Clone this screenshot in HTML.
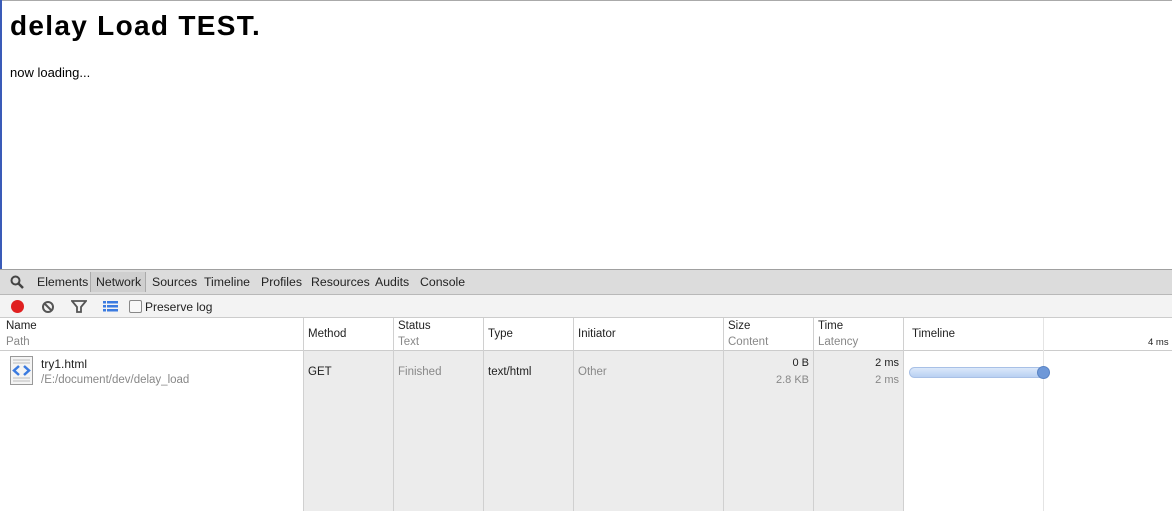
<!DOCTYPE html>
<html><head><meta charset="utf-8"><style>
*{margin:0;padding:0;box-sizing:border-box}
body{width:1172px;height:511px;overflow:hidden;background:#fff;font-family:"Liberation Sans","Noto Sans CJK JP",sans-serif;position:relative}
.abs{position:absolute}
h1{position:absolute;left:10px;top:10px;font-size:28px;font-weight:bold;letter-spacing:1.3px}
.t{font-size:12px;color:#222;white-space:nowrap}
.g{color:#888}
.vl{position:absolute;width:1px;background:#d0d0d0}
.tab{font-size:12.3px}
</style></head><body>
<div class="abs" style="left:0;top:0;width:1172px;height:1px;background:#aaa"></div>
<div class="abs" style="left:0;top:0;width:2px;height:270px;background:#3a5bb8"></div>
<h1>delay Load TEST.</h1>
<div class="abs t" style="left:10px;top:65px;font-size:13px;color:#000">now loading...</div>

<div class="abs" style="left:0;top:269px;width:1172px;height:26px;background:#dcdcdc;border-top:1px solid #a0a0a0;border-bottom:1px solid #b8b8b8"></div>
<svg class="abs" style="left:10px;top:275px" width="14" height="14"><circle cx="5.5" cy="5.5" r="4" fill="none" stroke="#444" stroke-width="2"/><line x1="8.5" y1="8.5" x2="13" y2="13" stroke="#444" stroke-width="2.5"/></svg>
<div class="abs" style="left:90px;top:272px;width:56px;height:20px;background:#cfcfcf;border-left:1px solid #aaa;border-right:1px solid #aaa"></div>
<div class="abs t tab" style="left:37px;top:275px">Elements</div>
<div class="abs t tab" style="left:96px;top:275px">Network</div>
<div class="abs t tab" style="left:152px;top:275px">Sources</div>
<div class="abs t tab" style="left:204px;top:275px">Timeline</div>
<div class="abs t tab" style="left:261px;top:275px">Profiles</div>
<div class="abs t tab" style="left:311px;top:275px">Resources</div>
<div class="abs t tab" style="left:375px;top:275px">Audits</div>
<div class="abs t tab" style="left:420px;top:275px">Console</div>

<div class="abs" style="left:0;top:295px;width:1172px;height:23px;background:#f3f3f3;border-bottom:1px solid #ccc"></div>
<div class="abs" style="left:11px;top:300px;width:13px;height:13px;border-radius:50%;background:#e02020"></div>
<svg class="abs" style="left:41px;top:300px" width="14" height="14"><circle cx="7" cy="7" r="5" fill="none" stroke="#555" stroke-width="2"/><line x1="3.5" y1="3.5" x2="10.5" y2="10.5" stroke="#555" stroke-width="2"/></svg>
<svg class="abs" style="left:71px;top:300px" width="16" height="13"><path d="M1 1H15L10 7V12H6V7Z" fill="none" stroke="#555" stroke-width="1.8"/></svg>
<svg class="abs" style="left:103px;top:301px" width="15" height="11"><g fill="#3b7be0"><rect x="0" y="0" width="3" height="2.5"/><rect x="4" y="0" width="11" height="2.5"/><rect x="0" y="4" width="3" height="2.5"/><rect x="4" y="4" width="11" height="2.5"/><rect x="0" y="8" width="3" height="2.5"/><rect x="4" y="8" width="11" height="2.5"/></g></svg>
<div class="abs" style="left:129px;top:300px;width:13px;height:13px;border:1px solid #888;border-radius:2px;background:#f8f8f8"></div>
<div class="abs t" style="left:145px;top:300px;font-size:12px">Preserve log</div>

<div class="abs" style="left:303px;top:350px;width:600px;height:161px;background:#ececec"></div>
<div class="abs" style="left:0;top:350px;width:1172px;height:1px;background:#ccc"></div>
<div class="vl" style="left:303px;top:318px;height:193px"></div>
<div class="vl" style="left:393px;top:318px;height:193px"></div>
<div class="vl" style="left:483px;top:318px;height:193px"></div>
<div class="vl" style="left:573px;top:318px;height:193px"></div>
<div class="vl" style="left:723px;top:318px;height:193px"></div>
<div class="vl" style="left:813px;top:318px;height:193px"></div>
<div class="vl" style="left:903px;top:318px;height:193px"></div>
<div class="vl" style="left:1043px;top:318px;height:193px;background:#e4e4e4"></div>

<div class="abs t" style="left:6px;top:320px;font-size:11.5px">Name</div>
<div class="abs t g" style="left:6px;top:336px;font-size:11.5px">Path</div>
<div class="abs t" style="left:308px;top:328px;font-size:11.5px">Method</div>
<div class="abs t" style="left:398px;top:320px;font-size:11.5px">Status</div>
<div class="abs t g" style="left:398px;top:336px;font-size:11.5px">Text</div>
<div class="abs t" style="left:488px;top:328px;font-size:11.5px">Type</div>
<div class="abs t" style="left:578px;top:328px;font-size:11.5px">Initiator</div>
<div class="abs t" style="left:728px;top:320px;font-size:11.5px">Size</div>
<div class="abs t g" style="left:728px;top:336px;font-size:11.5px">Content</div>
<div class="abs t" style="left:818px;top:320px;font-size:11.5px">Time</div>
<div class="abs t g" style="left:818px;top:336px;font-size:11.5px">Latency</div>
<div class="abs t" style="left:912px;top:328px;font-size:11.5px">Timeline</div>
<div class="abs t" style="left:1148px;top:337px;font-size:9.5px">4 ms</div>

<svg class="abs" style="left:10px;top:356px" width="24" height="30"><rect x="0.5" y="0.5" width="22" height="28" fill="#f4f4f4" stroke="#999"/><g stroke="#bbb"><line x1="3" y1="4" x2="20" y2="4"/><line x1="3" y1="7" x2="20" y2="7"/><line x1="3" y1="22" x2="20" y2="22"/><line x1="3" y1="25" x2="20" y2="25"/></g><path d="M9 10L4 14.5L9 19M14 10L19 14.5L14 19" fill="none" stroke="#3b7be0" stroke-width="2.5"/></svg>
<div class="abs t" style="left:41px;top:357px;font-size:12px">try1.html</div>
<div class="abs t g" style="left:41px;top:374px;font-size:11.5px">/E:/document/dev/delay_load</div>
<div class="abs t" style="left:308px;top:366px;font-size:11.5px">GET</div>
<div class="abs t g" style="left:398px;top:366px;font-size:11.5px">Finished</div>
<div class="abs t" style="left:488px;top:366px;font-size:11.5px">text/html</div>
<div class="abs t g" style="left:578px;top:366px;font-size:11.5px">Other</div>
<div class="abs t" style="left:724px;top:357px;width:85px;text-align:right;font-size:11px">0 B</div>
<div class="abs t g" style="left:724px;top:374px;width:85px;text-align:right;font-size:11px">2.8 KB</div>
<div class="abs t" style="left:814px;top:357px;width:85px;text-align:right;font-size:11px">2 ms</div>
<div class="abs t g" style="left:814px;top:374px;width:85px;text-align:right;font-size:11px">2 ms</div>
<div class="abs" style="left:909px;top:367px;width:140px;height:11px;border-radius:6px;background:linear-gradient(#dbe8fa,#b9d0f2);border:1px solid #a8c0e6"></div>
<div class="abs" style="left:1037px;top:366px;width:13px;height:13px;border-radius:50%;background:#6e98d8;border:1px solid #5a84c4"></div>
</body></html>
